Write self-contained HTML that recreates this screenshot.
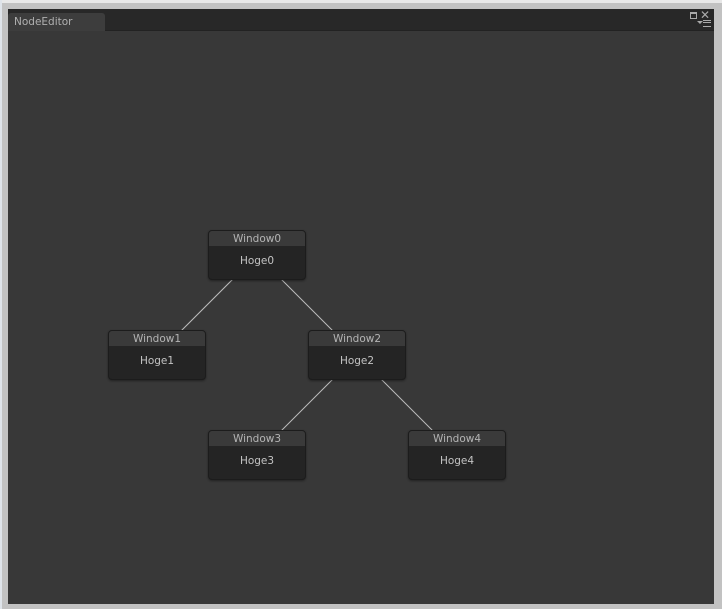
<!DOCTYPE html><html><head><style>
body{margin:0;width:722px;height:609px;background:#c2c2c2;position:relative;overflow:hidden;font-family:"DejaVu Sans","Liberation Sans",sans-serif}
.top{position:absolute;left:0;top:0;width:722px;height:3px;background:#e8e8e8}
.lft{position:absolute;left:0;top:0;width:2px;height:609px;background:#dfe4ea}
.win{position:absolute;left:8px;top:9px;width:706px;height:595px;background:#383838}
.bar{position:absolute;left:0;top:0;width:706px;height:21px;background:#282828;border-bottom:1px solid #222}
.tab{position:absolute;left:0;top:4px;width:97px;height:18px;background:#3d3d3d;border-radius:3px 3px 0 0;color:#b0b0b0;font-size:10.5px;line-height:18px;padding-left:6px;box-sizing:border-box}
.node{position:absolute;width:98px;height:50px;background:#242424;border:1px solid #1c1c1c;border-radius:4px;box-sizing:border-box;box-shadow:0 1px 2px rgba(0,0,0,.4);overflow:hidden}
.node .h{height:15px;background:#3a3a3a;color:#b4b4b4;font-size:10.5px;text-align:center;line-height:17px}
.node .b{color:#c4c4c4;font-size:10.5px;text-align:center;line-height:30px}
svg{position:absolute;left:0;top:0}
</style></head><body>
<div class="top"></div><div class="lft"></div>
<div class="win">
<div class="bar"><div class="tab">NodeEditor</div>
<div style="position:absolute;left:682px;top:3px;width:5px;height:4px;border:1px solid #aaa;border-top-width:2px"></div>
<div style="position:absolute;left:692px;top:-1px;color:#aaa;font-size:12px">✕</div>
<div style="position:absolute;left:689px;top:12px;width:0;height:0;border-left:3px solid transparent;border-right:3px solid transparent;border-top:3px solid #aaa"></div>
<div style="position:absolute;left:695px;top:11px;width:8px;height:5px;border-top:1px solid #aaa;border-bottom:1px solid #aaa"><div style="margin-top:1px;height:1px;background:#aaa"></div></div>
</div>
</div>
<svg width="722" height="609"><g stroke="#bcbcbc" stroke-width="1">
<line x1="257" y1="255" x2="157" y2="355"/><line x1="257" y1="255" x2="357" y2="355"/>
<line x1="357" y1="355" x2="257" y2="455"/><line x1="357" y1="355" x2="457" y2="455"/></g></svg>
<div class="node" style="left:208px;top:230px"><div class="h">Window0</div><div class="b">Hoge0</div></div>
<div class="node" style="left:108px;top:330px"><div class="h">Window1</div><div class="b">Hoge1</div></div>
<div class="node" style="left:308px;top:330px"><div class="h">Window2</div><div class="b">Hoge2</div></div>
<div class="node" style="left:208px;top:430px"><div class="h">Window3</div><div class="b">Hoge3</div></div>
<div class="node" style="left:408px;top:430px"><div class="h">Window4</div><div class="b">Hoge4</div></div>
</body></html>
